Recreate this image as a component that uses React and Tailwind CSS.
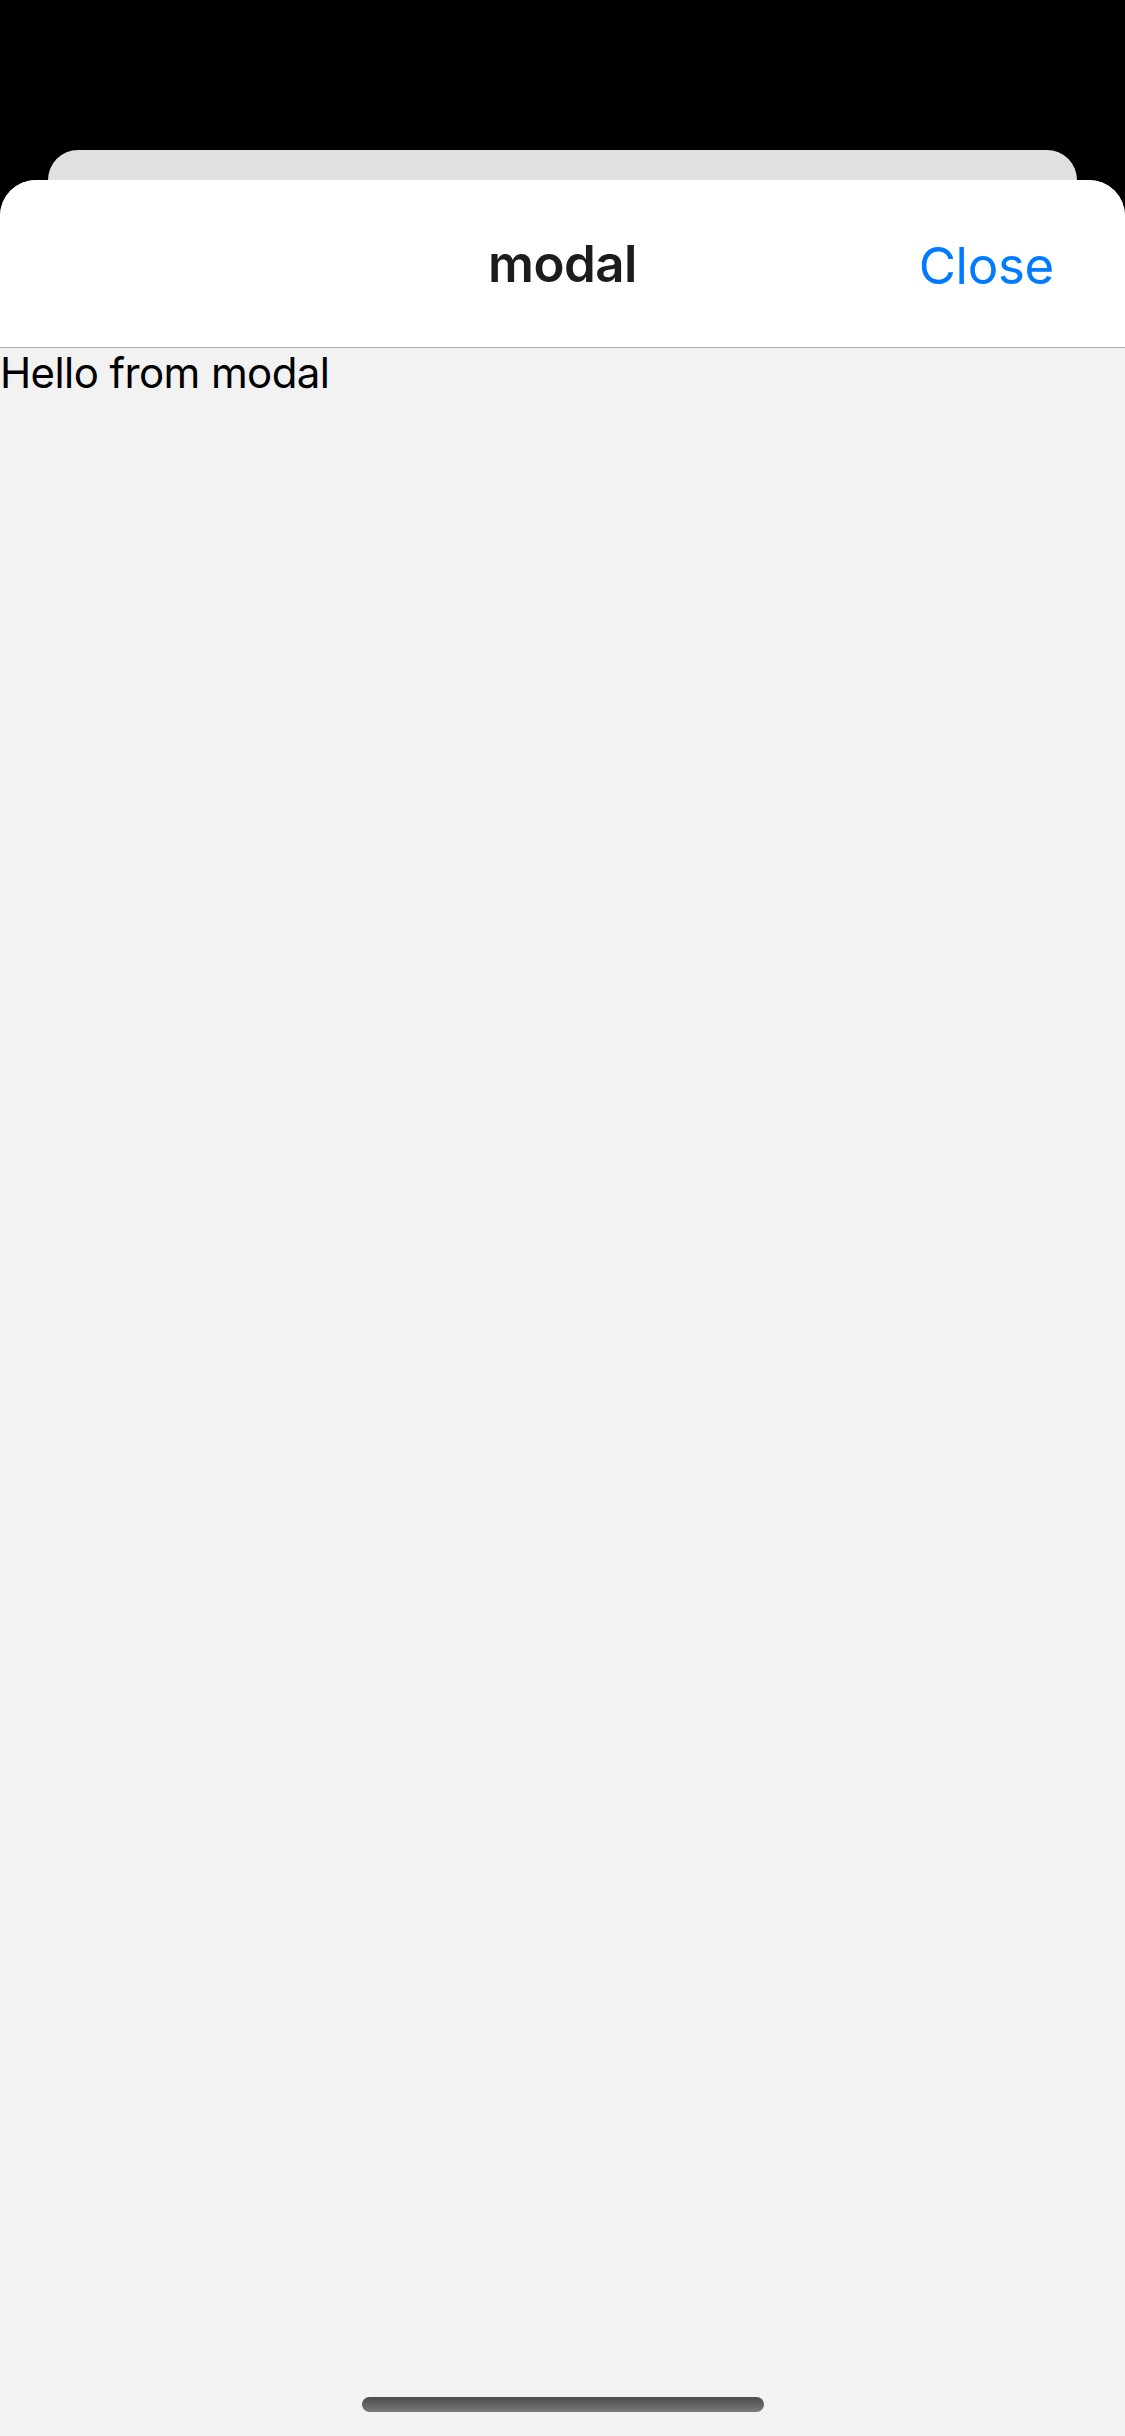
import React from 'react';

const font = { fontFamily: 'Inter, "Noto Sans", sans-serif' };

const ModalHeader = ({ title, onClose }) => (
  <div className="relative flex h-[168px] items-center justify-center border-b border-[#adadad] bg-white rounded-t-[36px]">
    <span className="pt-[2px] text-[51px] font-semibold tracking-[-0.5px] text-[#1c1c1e]">{title}</span>
    <button
      onClick={onClose}
      className="absolute right-[71px] top-0 flex h-full items-center pt-[6px] text-[51px] tracking-[-0.3px] text-[#007aff]"
    >
      Close
    </button>
  </div>
);

const App = () => {
  return (
    <div className="flex h-[2436px] w-[1125px] flex-col overflow-hidden bg-black" style={font}>
      {/* presenting screen peeking behind the sheet */}
      <div className="mt-[150px] mx-[48px] h-[30px] shrink-0 rounded-t-[30px] bg-[#e0e0e0]" />

      {/* sheet */}
      <div className="relative flex flex-1 flex-col rounded-t-[36px] bg-[#f2f2f2]">
        <ModalHeader title="modal" onClose={() => {}} />
        <div className="flex-1">
          <p className="text-[42px] leading-[50px] tracking-[-0.6px] text-black">Hello from modal</p>
        </div>

        {/* home indicator */}
        <div className="absolute bottom-[24px] left-1/2 h-[15px] w-[402px] -translate-x-1/2 rounded-full bg-gradient-to-b from-[#4a4a4a] to-[#7a7a7a]" />
      </div>
    </div>
  );
};

export default App;
